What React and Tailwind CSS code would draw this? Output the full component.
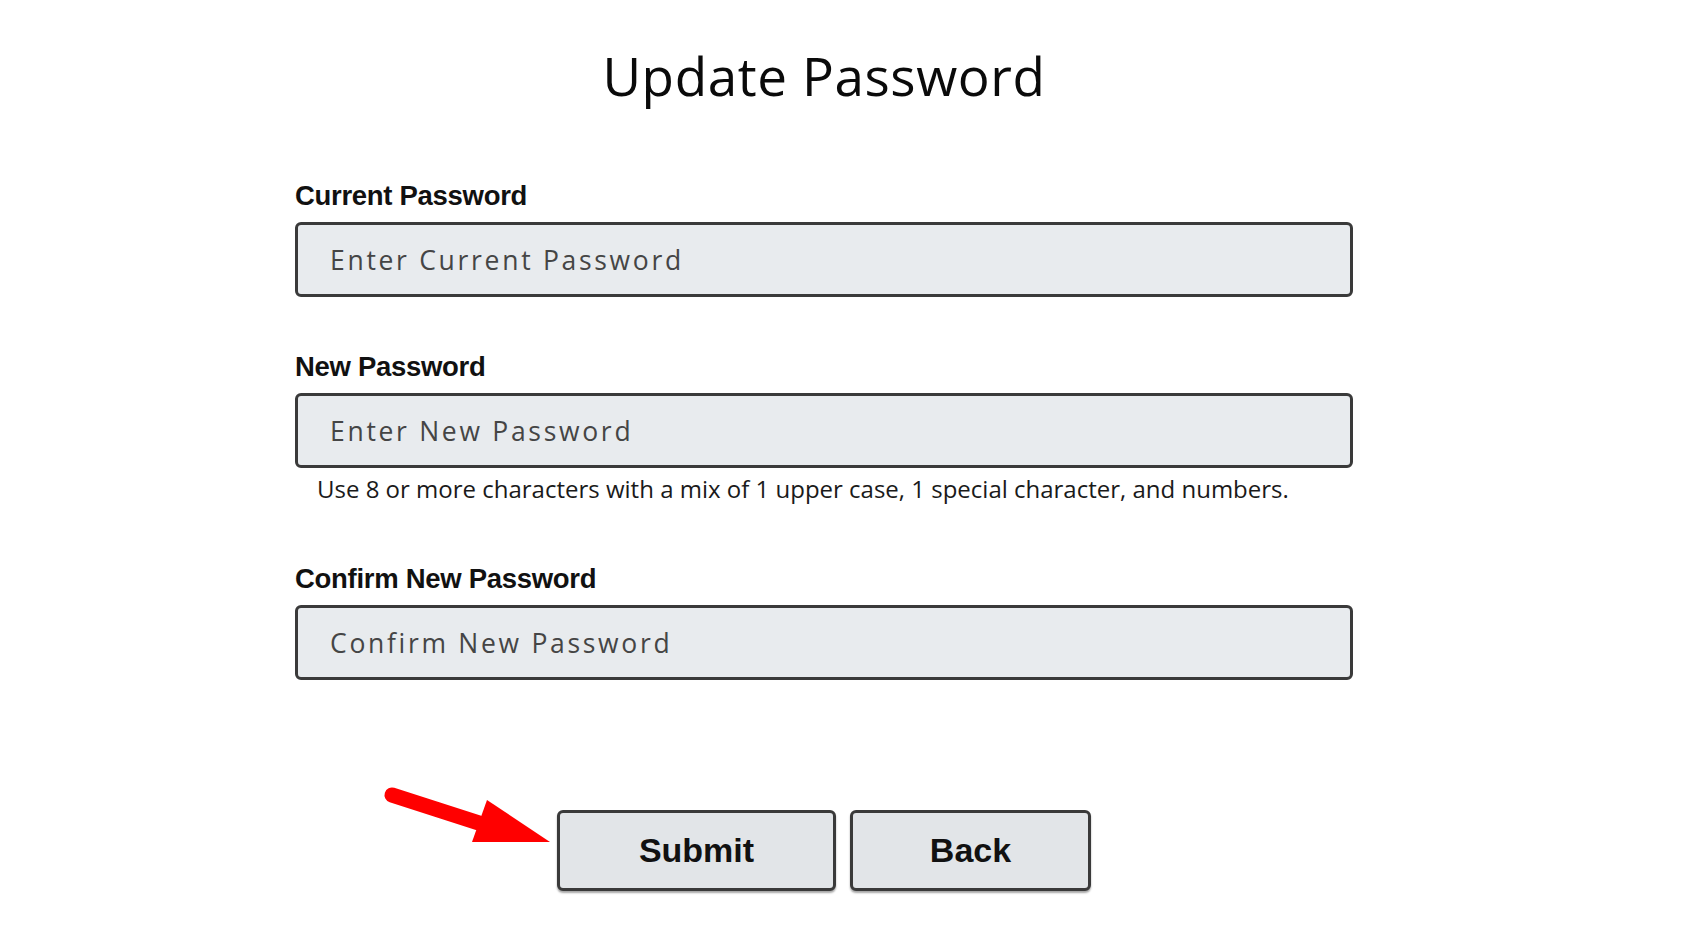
import React from "react";

function Field({ label, placeholder, className = "" }) {
  return (
    <div className={className}>
      <div className="font-['Liberation_Sans',Arial,sans-serif] font-bold text-[27.5px] leading-[30px] tracking-[-0.3px] text-[#111]">
        {label}
      </div>
      <div className="mt-[11px] h-[75px] rounded-[6px] border-[3px] border-[#3a3a3a] bg-[#e8ebee] flex items-center pl-[32px] pt-[2px]">
        <span className="font-['Open_Sans',sans-serif] text-[26.5px] tracking-[2.7px] text-[#454545]">
          {placeholder}
        </span>
      </div>
    </div>
  );
}

export default function App() {
  return (
    <div className="relative w-[1700px] h-[950px] bg-white overflow-hidden">
      <div className="ml-[295px] w-[1058px] pt-[40px] flex flex-col">
        <h1 className="text-center font-['Open_Sans',sans-serif] font-medium text-[53px] leading-[72px] text-[#0a0a0a] tracking-[0.6px]">
          Update Password
        </h1>

        <Field className="mt-[69px]" label="Current Password" placeholder="Enter Current Password" />
        <Field className="mt-[55px]" label="New Password" placeholder="Enter New Password" />
        <div className="mt-[7px] pl-[22px] font-['Open_Sans',sans-serif] font-medium text-[24px] leading-[28px] text-[#1a1a1a]">
          Use 8 or more characters with a mix of 1 upper case, 1 special character, and numbers.
        </div>
        <Field className="mt-[61px]" label="Confirm New Password" placeholder="Confirm New Password" />

        <div className="mt-[130px] flex justify-center gap-[14px]">
          <button className="w-[279px] h-[81px] rounded-[6px] border-[3px] border-[#3a3a3a] bg-[#e2e5e8] shadow-[0_2px_2px_rgba(0,0,0,0.35)] font-['Liberation_Sans',Arial,sans-serif] font-bold text-[34px] text-[#111]">
            Submit
          </button>
          <button className="w-[241px] h-[81px] rounded-[6px] border-[3px] border-[#3a3a3a] bg-[#e2e5e8] shadow-[0_2px_2px_rgba(0,0,0,0.35)] font-['Liberation_Sans',Arial,sans-serif] font-bold text-[34px] text-[#111]">
            Back
          </button>
        </div>
      </div>

      <svg className="absolute left-[382px] top-[783px]" width="180" height="70" viewBox="0 0 180 70">
        <line x1="10" y1="12" x2="100" y2="41" stroke="#ff0000" strokeWidth="15" strokeLinecap="round" />
        <polygon points="105,17 90,59 168,59" fill="#ff0000" />
      </svg>
    </div>
  );
}
